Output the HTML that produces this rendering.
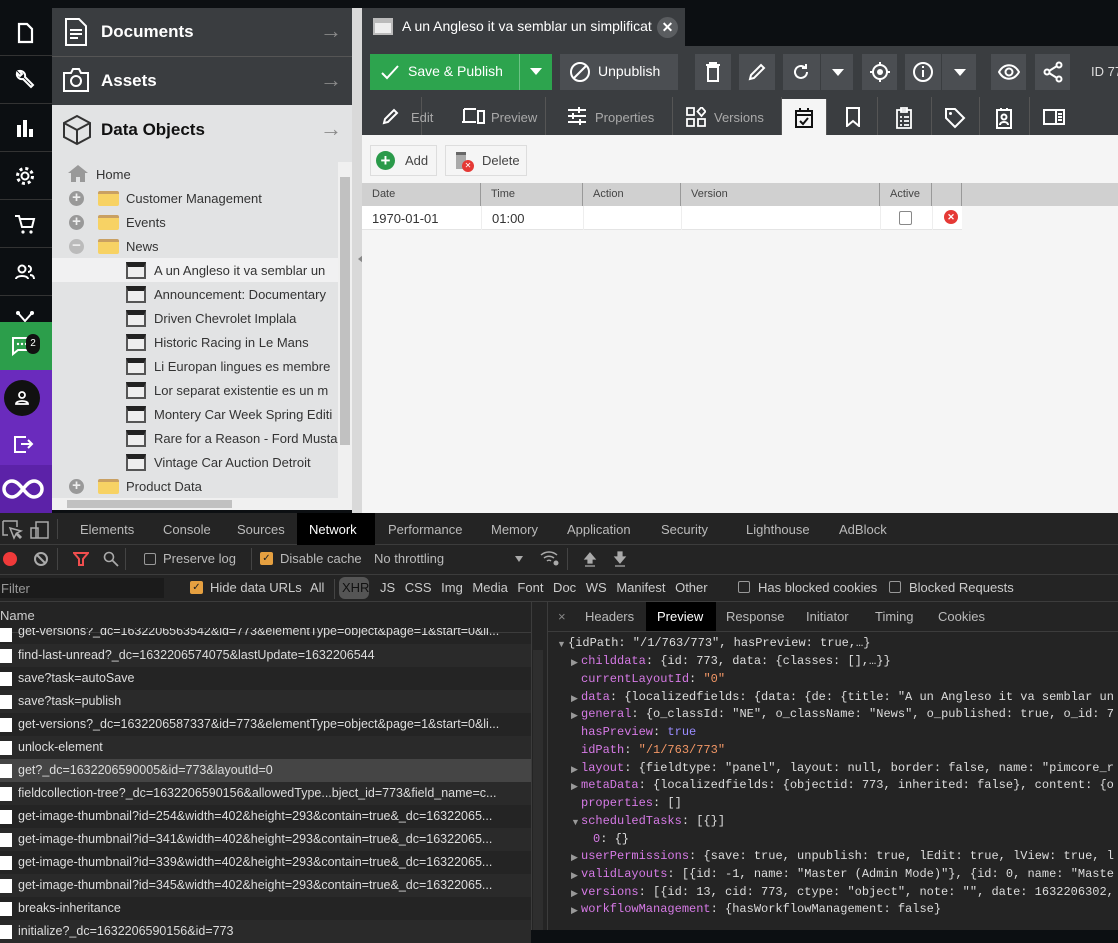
<!DOCTYPE html>
<html><head><meta charset="utf-8"><style>
*{box-sizing:border-box;margin:0;padding:0}
body{width:1118px;height:930px;overflow:hidden;background:#0c0f12;font-family:"Liberation Sans",sans-serif;position:relative}
.a{position:absolute}
.sb svg{position:absolute;left:14px}
.hd{position:absolute;left:52px;width:300px;height:48px;color:#fff;font-weight:bold;font-size:17px}
.hd span{position:absolute;left:49px;top:14px}
.hd .ar{left:auto;right:10px;top:10px;color:#8a8a8a;font-weight:normal;font-size:22px}
.tr{position:absolute;left:52px;width:286px;height:24px;font-size:13px;color:#333}
.tr span{position:absolute;top:5px}
.fold{position:absolute;left:46px;top:5px;width:21px;height:15px;background:#f7d264;border-top:3px solid #c9a062;border-radius:2px}
.pm{position:absolute;left:17px;top:5px;width:15px;height:15px;border-radius:50%;background:#999;color:#eee;font-size:15px;line-height:14px;text-align:center;font-weight:bold}
.obj{position:absolute;left:74px;top:4px;width:20px;height:17px;background:#eee;border:2px solid #555;border-top:5px solid #222}
.btn{position:absolute;top:54px;height:36px;background:#4b4e52;color:#fff}
.btn svg{position:absolute;left:50%;top:50%;transform:translate(-50%,-50%)}
.tab{position:absolute;top:97px;height:38px;color:#aaa;font-size:13px;border-right:1px solid #555}
.tab svg{position:absolute;top:10px}
.tab span{position:absolute;top:13px}
.gh{position:absolute;top:183px;height:23px;font-size:11px;color:#444;border-right:1px solid #999;padding:5px 0 0 10px}
.dt{position:absolute;top:513px;height:32px;color:#bbb;font-size:13px;padding-top:9px}
.row{position:absolute;left:0;width:531px;height:23px;font-size:12.5px;color:#ddd;white-space:nowrap;overflow:hidden}
.row i{position:absolute;left:0;top:5px;width:12px;height:14px;background:#fff}
.row span{position:absolute;left:18px;top:4px}
.js{position:absolute;left:568px;font-family:"Liberation Mono","DejaVu Sans Mono",monospace;font-size:12px;color:#ddd;white-space:nowrap}
.k{color:#d67ae6}.s{color:#f29766}.n{color:#9a8cff}
.tg{position:absolute;left:571px;font-size:9px;color:#999}
</style></head><body>
<!-- left sidebar -->
<div class="a sb" style="left:0;top:0;width:52px;height:322px;background:#0c0f12">
<div class="a" style="left:0;top:55px;width:52px;height:1px;background:#333"></div>
<div class="a" style="left:0;top:103px;width:52px;height:1px;background:#333"></div>
<div class="a" style="left:0;top:151px;width:52px;height:1px;background:#333"></div>
<div class="a" style="left:0;top:199px;width:52px;height:1px;background:#333"></div>
<div class="a" style="left:0;top:247px;width:52px;height:1px;background:#333"></div>
<div class="a" style="left:0;top:295px;width:52px;height:1px;background:#333"></div>
<svg style="top:22px" width="22" height="22" viewBox="0 0 22 22"><path d="M5 2h8l5 5v13H5z" fill="none" stroke="#fff" stroke-width="2.2"/></svg>
<svg style="top:69px" width="22" height="22" viewBox="0 0 22 22"><path d="M3 4a5 5 0 0 0 6 6l8 8 2-2-8-8a5 5 0 0 0-6-6l3 3-2 2z" fill="none" stroke="#fff" stroke-width="2"/></svg>
<svg style="top:117px" width="22" height="22" viewBox="0 0 22 22"><path d="M3 8h4v12H3zM9 3h4v17H9zM15 12h4v8h-4z" fill="#fff"/></svg>
<svg style="top:165px" width="22" height="22" viewBox="0 0 22 22"><circle cx="11" cy="11" r="3.5" fill="none" stroke="#fff" stroke-width="2"/><circle cx="11" cy="11" r="7.5" fill="none" stroke="#fff" stroke-width="3" stroke-dasharray="3 2.9"/></svg>
<svg style="top:213px" width="22" height="22" viewBox="0 0 22 22"><path d="M1 3h4l3 11h10l2-8H6" fill="none" stroke="#fff" stroke-width="2"/><circle cx="9" cy="19" r="1.6" fill="#fff"/><circle cx="17" cy="19" r="1.6" fill="#fff"/></svg>
<svg style="top:261px" width="22" height="22" viewBox="0 0 22 22"><circle cx="8" cy="8" r="3.5" fill="none" stroke="#fff" stroke-width="2"/><path d="M2 18c0-4 12-4 12 0M14 5a3 3 0 0 1 0 6M16 14c3 0 4 2 4 4" fill="none" stroke="#fff" stroke-width="2"/></svg>
<svg style="top:309px" width="22" height="14" viewBox="0 0 22 14"><circle cx="4" cy="4" r="2" fill="#fff"/><circle cx="18" cy="4" r="2" fill="#fff"/><path d="M4 4l7 8 7-8" stroke="#fff" stroke-width="2" fill="none"/></svg>
</div>
<div class="a" style="left:0;top:322px;width:52px;height:48px;background:#2c9e4b">
<svg class="a" style="left:11px;top:13px" width="22" height="22" viewBox="0 0 22 22"><path d="M2 3h18v12H7l-5 4z" fill="none" stroke="#fff" stroke-width="2"/><circle cx="7" cy="9" r="1.2" fill="#fff"/><circle cx="11" cy="9" r="1.2" fill="#fff"/><circle cx="15" cy="9" r="1.2" fill="#fff"/></svg>
<div class="a" style="left:26px;top:12px;width:14px;height:20px;border-radius:7px;background:#111;color:#fff;font-size:10px;text-align:center;line-height:20px">2</div>
</div>
<div class="a" style="left:0;top:370px;width:52px;height:95px;background:#6a2bbd">
<div class="a" style="left:4px;top:10px;width:36px;height:36px;border-radius:50%;background:#111"></div>
<svg class="a" style="left:13px;top:19px" width="18" height="18" viewBox="0 0 18 18"><circle cx="9" cy="6" r="3" fill="none" stroke="#fff" stroke-width="1.8"/><path d="M3 15c0-4 12-4 12 0z" fill="none" stroke="#fff" stroke-width="1.8"/></svg>
<svg class="a" style="left:12px;top:63px" width="22" height="22" viewBox="0 0 22 22"><path d="M14 4H3v15h11M9 11h11M16 7l4 4-4 4" fill="none" stroke="#fff" stroke-width="2"/></svg>
</div>
<div class="a" style="left:0;top:465px;width:52px;height:48px;background:#5c22a8">
<svg class="a" style="left:2px;top:12px" width="42" height="24" viewBox="0 0 42 24"><path d="M21 12c-4-5-7-8-11-8a8 8 0 0 0 0 16c4 0 7-3 11-8s7-8 11-8a8 8 0 0 1 0 16c-4 0-7-3-11-8z" fill="none" stroke="#fff" stroke-width="3.5"/></svg>
</div>
<!-- left panel -->
<div class="hd" style="top:8px;background:#3a3d40"><svg class="a" style="left:12px;top:10px" width="24" height="28" viewBox="0 0 24 28"><path d="M2 1h13l7 7v19H2zM6 12h12M6 16h12M6 20h8" fill="none" stroke="#fff" stroke-width="2"/></svg><span>Documents</span><span class="ar">→</span></div>
<div class="a" style="left:52px;top:56px;width:300px;height:1px;background:#555"></div>
<div class="hd" style="top:57px;background:#3a3d40"><svg class="a" style="left:10px;top:10px" width="28" height="26" viewBox="0 0 28 26"><path d="M2 6h7l2-4h6l2 4h7v18H2z" fill="none" stroke="#fff" stroke-width="2"/><circle cx="14" cy="14" r="5" fill="none" stroke="#fff" stroke-width="2"/></svg><span>Assets</span><span class="ar">→</span></div>
<div class="a" style="left:52px;top:105px;width:300px;height:405px;background:#e2e3e4"></div>
<div class="hd" style="top:106px;color:#111"><svg class="a" style="left:10px;top:8px" width="30" height="32" viewBox="0 0 30 32"><path d="M15 2l13 7v14l-13 7-13-7V9zM2 9l13 7 13-7M15 16v14" fill="none" stroke="#333" stroke-width="2"/></svg><span>Data Objects</span><span class="ar">→</span></div>
<div class="tr" style="top:162px"><svg class="a" style="left:16px;top:3px" width="20" height="17" viewBox="0 0 20 17"><path d="M10 0l10 8h-3v9h-5v-5H8v5H3V8H0z" fill="#999"/></svg><span style="left:44px">Home</span></div>
<div class="tr" style="top:186px"><div class="pm">+</div><div class="fold"></div><span style="left:74px">Customer Management</span></div>
<div class="tr" style="top:210px"><div class="pm">+</div><div class="fold"></div><span style="left:74px">Events</span></div>
<div class="tr" style="top:234px"><div class="pm" style="background:#bbb">−</div><div class="fold"></div><span style="left:74px">News</span></div>
<div class="tr" style="top:258px;background:#f1f1f2"><div class="obj"></div><span style="left:102px">A un Angleso it va semblar un</span></div>
<div class="tr" style="top:282px"><div class="obj"></div><span style="left:102px">Announcement: Documentary</span></div>
<div class="tr" style="top:306px"><div class="obj"></div><span style="left:102px">Driven Chevrolet Implala</span></div>
<div class="tr" style="top:330px"><div class="obj"></div><span style="left:102px">Historic Racing in Le Mans</span></div>
<div class="tr" style="top:354px"><div class="obj"></div><span style="left:102px">Li Europan lingues es membre</span></div>
<div class="tr" style="top:378px"><div class="obj"></div><span style="left:102px">Lor separat existentie es un m</span></div>
<div class="tr" style="top:402px"><div class="obj"></div><span style="left:102px">Montery Car Week Spring Editi</span></div>
<div class="tr" style="top:426px"><div class="obj"></div><span style="left:102px">Rare for a Reason - Ford Musta</span></div>
<div class="tr" style="top:450px"><div class="obj"></div><span style="left:102px">Vintage Car Auction Detroit</span></div>
<div class="tr" style="top:474px"><div class="pm">+</div><div class="fold"></div><span style="left:74px">Product Data</span></div>
<div class="a" style="left:338px;top:162px;width:14px;height:336px;background:#f0f0f0"></div>
<div class="a" style="left:340px;top:177px;width:10px;height:268px;background:#c1c1c1"></div>
<div class="a" style="left:52px;top:498px;width:300px;height:12px;background:#f0f0f0"></div>
<div class="a" style="left:67px;top:500px;width:165px;height:8px;background:#c1c1c1"></div>
<div class="a" style="left:352px;top:8px;width:10px;height:505px;background:#d9d9d9"></div>
<div class="a" style="left:354px;top:255px;width:0;height:0;border:4px solid transparent;border-right:5px solid #888"></div>
<!-- right: tab -->
<div class="a" style="left:362px;top:8px;width:323px;height:38px;background:#3a3d40"></div>
<div class="a" style="left:373px;top:18px;width:20px;height:17px;background:#eee;border:2px solid #bbb;border-top:5px solid #bbb"></div>
<div class="a" style="left:402px;top:18px;color:#fff;font-size:14px">A un Angleso it va semblar un simplificat</div>
<div class="a" style="left:657px;top:17px;width:21px;height:21px;border-radius:50%;background:#5a5d60;color:#fff;text-align:center;font-size:14px;line-height:21px;font-weight:bold">✕</div>
<div class="a" style="left:362px;top:46px;width:756px;height:89px;background:#3a3d40"></div>
<div class="a" style="left:370px;top:54px;width:182px;height:36px;background:#2da44e"></div>
<div class="a" style="left:519px;top:54px;width:1px;height:36px;background:#6cc285"></div>
<svg class="a" style="left:380px;top:62px" width="20" height="20" viewBox="0 0 20 20"><path d="M2 11l5 5L18 4" fill="none" stroke="#fff" stroke-width="2"/></svg>
<div class="a" style="left:408px;top:63px;color:#fff;font-size:14px">Save &amp; Publish</div>
<div class="a" style="left:530px;top:68px;border:6px solid transparent;border-top:7px solid #fff;border-bottom:0"></div>
<div class="btn" style="left:560px;width:118px"><svg style="left:20px" width="22" height="22" viewBox="0 0 22 22"><circle cx="11" cy="11" r="9" fill="none" stroke="#fff" stroke-width="2"/><path d="M5 17L17 5" stroke="#fff" stroke-width="2"/></svg><span class="a" style="left:38px;top:9px;font-size:14px">Unpublish</span></div>
<div class="btn" style="left:695px;width:36px"><svg width="16" height="20" viewBox="0 0 16 20"><path d="M1 3h14M5 3V1h6v2M3 5h10v14H3z" fill="none" stroke="#fff" stroke-width="2"/></svg></div>
<div class="btn" style="left:739px;width:36px"><svg width="20" height="20" viewBox="0 0 20 20"><path d="M3 17l1-4L14 3l3 3L7 16z" fill="none" stroke="#fff" stroke-width="2"/></svg></div>
<div class="btn" style="left:783px;width:70px"><svg style="left:18px" width="20" height="20" viewBox="0 0 20 20"><path d="M16 10a6 6 0 1 1-2-4.5M15 2v4h-4" fill="none" stroke="#fff" stroke-width="2"/></svg><div class="a" style="left:37px;top:0;width:1px;height:36px;background:#3a3d40"></div><div class="a" style="left:49px;top:15px;border:6px solid transparent;border-top:7px solid #fff;border-bottom:0"></div></div>
<div class="btn" style="left:862px;width:35px"><svg width="22" height="22" viewBox="0 0 22 22"><circle cx="11" cy="11" r="7" fill="none" stroke="#fff" stroke-width="2"/><circle cx="11" cy="11" r="3" fill="#fff"/><path d="M11 1v3M11 18v3M1 11h3M18 11h3" stroke="#fff" stroke-width="2"/></svg></div>
<div class="btn" style="left:905px;width:71px"><svg style="left:18px" width="22" height="22" viewBox="0 0 22 22"><circle cx="11" cy="11" r="9" fill="none" stroke="#fff" stroke-width="2"/><path d="M11 9v7M11 5v2" stroke="#fff" stroke-width="2"/></svg><div class="a" style="left:36px;top:0;width:1px;height:36px;background:#3a3d40"></div><div class="a" style="left:49px;top:15px;border:6px solid transparent;border-top:7px solid #fff;border-bottom:0"></div></div>
<div class="btn" style="left:991px;width:35px"><svg width="22" height="16" viewBox="0 0 22 16"><path d="M1 8c5-9 15-9 20 0-5 9-15 9-20 0z" fill="none" stroke="#fff" stroke-width="2"/><circle cx="11" cy="8" r="3.5" fill="none" stroke="#fff" stroke-width="2"/></svg></div>
<div class="btn" style="left:1035px;width:35px"><svg width="20" height="22" viewBox="0 0 20 22"><circle cx="16" cy="4" r="2.5" fill="none" stroke="#fff" stroke-width="2"/><circle cx="4" cy="11" r="2.5" fill="none" stroke="#fff" stroke-width="2"/><circle cx="16" cy="18" r="2.5" fill="none" stroke="#fff" stroke-width="2"/><path d="M6 10l8-5M6 12l8 5" stroke="#fff" stroke-width="2"/></svg></div>
<div class="a" style="left:1091px;top:64px;color:#ddd;font-size:13px;white-space:nowrap">ID 773</div>
<!-- tabs -->
<div class="tab" style="left:362px;width:60px"><svg style="left:20px" width="18" height="18" viewBox="0 0 18 18"><path d="M2 16l1-4L12 3l3 3-9 9z" fill="none" stroke="#fff" stroke-width="2"/></svg><span style="left:49px">Edit</span></div>
<div class="tab" style="left:422px;width:124px"><svg style="left:40px" width="24" height="18" viewBox="0 0 24 18"><path d="M2 2h12M2 2v13h12M0 15h14M16 4h6v12h-6z" fill="none" stroke="#fff" stroke-width="2"/></svg><span style="left:69px">Preview</span></div>
<div class="tab" style="left:546px;width:127px"><svg style="left:21px" width="20" height="18" viewBox="0 0 20 18"><path d="M1 3h18M1 9h18M1 15h18" stroke="#fff" stroke-width="2"/><path d="M12 0v6M6 6v6M13 12v6" stroke="#fff" stroke-width="2"/></svg><span style="left:49px">Properties</span></div>
<div class="tab" style="left:673px;width:109px"><svg style="left:13px" width="20" height="20" viewBox="0 0 20 20"><path d="M1 1h7v7H1zM1 12h7v7H1zM12 12h7v7h-7zM15.5 0l4 4.5-4 4.5-4-4.5z" fill="none" stroke="#fff" stroke-width="1.8"/></svg><span style="left:41px">Versions</span></div>
<div class="tab" style="left:782px;width:45px;background:#f5f5f5;top:99px;height:36px"><svg style="left:12px;top:8px" width="20" height="22" viewBox="0 0 20 22"><path d="M2 4h16v16H2zM2 8h16M6 1v4M14 1v4M6 14l3 3 5-6" fill="none" stroke="#111" stroke-width="2"/></svg></div>
<div class="tab" style="left:827px;width:51px"><svg style="left:19px" width="14" height="20" viewBox="0 0 14 20"><path d="M1 1h12v18l-6-5-6 5z" fill="none" stroke="#fff" stroke-width="2"/></svg></div>
<div class="tab" style="left:878px;width:54px"><svg style="left:16px" width="20" height="22" viewBox="0 0 20 22"><path d="M3 3h14v18H3zM7 1h6v4H7zM6 10h2M10 10h5M6 14h2M10 14h5M6 18h2M10 18h5" fill="none" stroke="#fff" stroke-width="1.8"/></svg></div>
<div class="tab" style="left:932px;width:48px"><svg style="left:12px" width="22" height="22" viewBox="0 0 22 22"><path d="M2 2h9l9 9-9 9-9-9z" fill="none" stroke="#fff" stroke-width="2"/><circle cx="6.5" cy="6.5" r="1.5" fill="#fff"/></svg></div>
<div class="tab" style="left:980px;width:50px"><svg style="left:14px" width="20" height="22" viewBox="0 0 20 22"><path d="M3 3h14v18H3zM7 1v3M13 1v3M6 18c0-4 8-4 8 0" fill="none" stroke="#fff" stroke-width="2"/><circle cx="10" cy="10" r="2.5" fill="none" stroke="#fff" stroke-width="2"/></svg></div>
<div class="tab" style="left:1030px;width:45px;border:0"><svg style="left:13px;top:12px" width="22" height="16" viewBox="0 0 22 16"><path d="M1 1h20v14H1zM13 1v14M15 5h4M15 8h4M15 11h4" fill="none" stroke="#fff" stroke-width="2"/></svg></div>
<!-- content -->
<div class="a" style="left:362px;top:135px;width:756px;height:378px;background:#f5f5f5"></div>
<div class="a" style="left:370px;top:145px;width:67px;height:31px;border:1px solid #ddd;background:#f5f5f5"></div>
<div class="a" style="left:376px;top:151px;width:19px;height:19px;border-radius:50%;background:#2a9a4a;color:#fff;text-align:center;font-weight:bold;font-size:17px;line-height:19px">+</div>
<div class="a" style="left:405px;top:153px;font-size:13px;color:#444">Add</div>
<div class="a" style="left:445px;top:145px;width:82px;height:31px;border:1px solid #ddd;background:#f5f5f5"></div>
<div class="a" style="left:456px;top:152px;width:10px;height:17px;background:#aaa;border-top:3px solid #666"></div>
<div class="a" style="left:462px;top:160px;width:12px;height:12px;border-radius:50%;background:#e53935;color:#fff;font-size:8px;text-align:center;line-height:12px">✕</div>
<div class="a" style="left:482px;top:153px;font-size:13px;color:#444">Delete</div>
<div class="a" style="left:362px;top:183px;width:756px;height:23px;background:#d0d0d0"></div>
<div class="gh" style="left:362px;width:119px">Date</div>
<div class="gh" style="left:481px;width:102px">Time</div>
<div class="gh" style="left:583px;width:98px">Action</div>
<div class="gh" style="left:681px;width:199px">Version</div>
<div class="gh" style="left:880px;width:52px">Active</div>
<div class="gh" style="left:932px;width:30px"></div>
<div class="a" style="left:362px;top:206px;width:600px;height:24px;background:#fff;border-bottom:1px solid #e4e4e4"></div>
<div class="a" style="left:481px;top:206px;width:1px;height:24px;background:#eee"></div>
<div class="a" style="left:583px;top:206px;width:1px;height:24px;background:#eee"></div>
<div class="a" style="left:681px;top:206px;width:1px;height:24px;background:#eee"></div>
<div class="a" style="left:880px;top:206px;width:1px;height:24px;background:#eee"></div>
<div class="a" style="left:932px;top:206px;width:1px;height:24px;background:#eee"></div>
<div class="a" style="left:372px;top:211px;font-size:13px;color:#333">1970-01-01</div>
<div class="a" style="left:492px;top:211px;font-size:13px;color:#333">01:00</div>
<div class="a" style="left:899px;top:211px;width:13px;height:14px;border:1px solid #888;border-radius:2px;background:#fff"></div>
<div class="a" style="left:944px;top:210px;width:14px;height:14px;border-radius:50%;background:#e53935;color:#fff;font-size:9px;text-align:center;line-height:14px;font-weight:bold">✕</div>
<!-- devtools -->
<div class="a" style="left:0;top:513px;width:1118px;height:417px;background:#242424"></div>
<div class="a" style="left:0;top:544px;width:1118px;height:1px;background:#3c3c3c"></div>
<div class="a" style="left:0;top:574px;width:1118px;height:1px;background:#3c3c3c"></div>
<div class="a" style="left:0;top:601px;width:1118px;height:1px;background:#3c3c3c"></div>
<svg class="a" style="left:2px;top:520px" width="48" height="20" viewBox="0 0 48 20"><path d="M1 1h14v6M1 1v14h5M8 8l4 10 2-4 4 4 1-1-4-4 4-2z" fill="none" stroke="#aaa" stroke-width="1.5"/><path d="M34 2h12v16H34zM29 8h7v10h-7z" fill="none" stroke="#aaa" stroke-width="1.5"/></svg>
<div class="a" style="left:57px;top:519px;width:1px;height:20px;background:#444"></div>
<div class="dt" style="left:80px">Elements</div>
<div class="dt" style="left:163px">Console</div>
<div class="dt" style="left:237px">Sources</div>
<div class="dt" style="left:297px;width:78px;background:#000;color:#fff;padding-left:12px">Network</div>
<div class="dt" style="left:388px">Performance</div>
<div class="dt" style="left:491px">Memory</div>
<div class="dt" style="left:567px">Application</div>
<div class="dt" style="left:661px">Security</div>
<div class="dt" style="left:746px">Lighthouse</div>
<div class="dt" style="left:839px">AdBlock</div>
<div class="a" style="left:3px;top:552px;width:14px;height:14px;border-radius:50%;background:#f03a3a"></div>
<svg class="a" style="left:33px;top:551px" width="16" height="16" viewBox="0 0 16 16"><circle cx="8" cy="8" r="6" fill="none" stroke="#aaa" stroke-width="2"/><path d="M4 4l8 8" stroke="#aaa" stroke-width="2"/></svg>
<div class="a" style="left:57px;top:548px;width:1px;height:22px;background:#444"></div>
<svg class="a" style="left:73px;top:551px" width="16" height="16" viewBox="0 0 16 16"><path d="M1 2h14l-5 6v6H6V8z" fill="none" stroke="#f04e4e" stroke-width="2"/></svg>
<svg class="a" style="left:103px;top:551px" width="16" height="16" viewBox="0 0 16 16"><circle cx="6" cy="6" r="4.5" fill="none" stroke="#aaa" stroke-width="1.6"/><path d="M9.5 9.5L15 15" stroke="#aaa" stroke-width="1.8"/></svg>
<div class="a" style="left:125px;top:548px;width:1px;height:22px;background:#444"></div>
<div class="a" style="left:144px;top:553px;width:12px;height:12px;border:1px solid #999;border-radius:2px"></div>
<div class="a" style="left:163px;top:551px;font-size:13px;color:#bbb">Preserve log</div>
<div class="a" style="left:251px;top:548px;width:1px;height:22px;background:#444"></div>
<div class="a" style="left:260px;top:552px;width:13px;height:13px;background:#e6a040;border-radius:2px;color:#222;font-size:10px;text-align:center;line-height:13px">✓</div>
<div class="a" style="left:280px;top:551px;font-size:13px;color:#bbb">Disable cache</div>
<div class="a" style="left:374px;top:551px;font-size:13px;color:#bbb">No throttling</div>
<div class="a" style="left:515px;top:556px;border:4px solid transparent;border-top:6px solid #aaa;border-bottom:0"></div>
<svg class="a" style="left:540px;top:549px" width="20" height="18" viewBox="0 0 20 18"><path d="M1 6a12 12 0 0 1 16 0M4 9a8 8 0 0 1 10 0M7 12a3 3 0 0 1 4 0" fill="none" stroke="#aaa" stroke-width="1.5"/><circle cx="16" cy="14" r="2.5" fill="#aaa"/></svg>
<div class="a" style="left:567px;top:548px;width:1px;height:22px;background:#444"></div>
<svg class="a" style="left:583px;top:551px" width="14" height="16" viewBox="0 0 14 16"><path d="M7 2L2 8h3v4h4V8h3zM2 15h10" fill="#aaa" stroke="#aaa" stroke-width="1.2"/></svg>
<svg class="a" style="left:613px;top:551px" width="14" height="16" viewBox="0 0 14 16"><path d="M7 12L2 6h3V1h4v5h3zM2 15h10" fill="#aaa" stroke="#aaa" stroke-width="1.2"/></svg>
<div class="a" style="left:0;top:578px;width:164px;height:20px;background:#1b1b1b"></div>
<div class="a" style="left:1px;top:581px;font-size:13px;color:#999">Filter</div>
<div class="a" style="left:190px;top:581px;width:13px;height:13px;background:#e6a040;border-radius:2px;color:#222;font-size:10px;text-align:center;line-height:13px">✓</div>
<div class="a" style="left:210px;top:580px;font-size:13px;color:#ccc">Hide data URLs</div>
<div class="a" style="left:310px;top:580px;font-size:13px;color:#ccc">All</div>
<div class="a" style="left:334px;top:579px;width:1px;height:20px;background:#444"></div>
<div class="a" style="left:339px;top:577px;width:30px;height:22px;border-radius:6px;background:#555"></div>
<div class="a" style="left:342px;top:580px;font-size:13px;color:#111">XHR</div>
<div class="a" style="left:380px;top:580px;font-size:13px;color:#ccc;word-spacing:6px">JS CSS Img Media Font Doc WS Manifest Other</div>
<div class="a" style="left:738px;top:581px;width:12px;height:12px;border:1px solid #999;border-radius:2px"></div>
<div class="a" style="left:758px;top:580px;font-size:13px;color:#ccc">Has blocked cookies</div>
<div class="a" style="left:889px;top:581px;width:12px;height:12px;border:1px solid #999;border-radius:2px"></div>
<div class="a" style="left:909px;top:580px;font-size:13px;color:#ccc">Blocked Requests</div>
<!-- name list -->
<div class="a" style="left:0;top:608px;font-size:13px;color:#ccc">Name</div>
<div class="a" style="left:0;top:632px;width:531px;height:1px;background:#3c3c3c"></div>
<div class="a" style="left:531px;top:602px;width:1px;height:328px;background:#3c3c3c"></div>
<div class="a" style="left:547px;top:602px;width:1px;height:328px;background:#3c3c3c"></div>
<div class="a" style="left:533px;top:650px;width:10px;height:280px;background:#2e2e2e"></div>
<div class="row" style="top:628px;height:15px"><i style="top:0"></i><span style="top:-4px">get-versions?_dc=1632206563542&amp;id=773&amp;elementType=object&amp;page=1&amp;start=0&amp;li...</span></div>
<div class="row" style="top:644px;background:#2a2a2a"><i></i><span>find-last-unread?_dc=1632206574075&amp;lastUpdate=1632206544</span></div>
<div class="row" style="top:667px"><i></i><span>save?task=autoSave</span></div>
<div class="row" style="top:690px;background:#2a2a2a"><i></i><span>save?task=publish</span></div>
<div class="row" style="top:713px"><i></i><span>get-versions?_dc=1632206587337&amp;id=773&amp;elementType=object&amp;page=1&amp;start=0&amp;li...</span></div>
<div class="row" style="top:736px;background:#2a2a2a"><i></i><span>unlock-element</span></div>
<div class="row" style="top:759px;background:#454545"><i></i><span>get?_dc=1632206590005&amp;id=773&amp;layoutId=0</span></div>
<div class="row" style="top:782px;background:#2a2a2a"><i></i><span>fieldcollection-tree?_dc=1632206590156&amp;allowedType...bject_id=773&amp;field_name=c...</span></div>
<div class="row" style="top:805px"><i></i><span>get-image-thumbnail?id=254&amp;width=402&amp;height=293&amp;contain=true&amp;_dc=16322065...</span></div>
<div class="row" style="top:828px;background:#2a2a2a"><i></i><span>get-image-thumbnail?id=341&amp;width=402&amp;height=293&amp;contain=true&amp;_dc=16322065...</span></div>
<div class="row" style="top:851px"><i></i><span>get-image-thumbnail?id=339&amp;width=402&amp;height=293&amp;contain=true&amp;_dc=16322065...</span></div>
<div class="row" style="top:874px;background:#2a2a2a"><i></i><span>get-image-thumbnail?id=345&amp;width=402&amp;height=293&amp;contain=true&amp;_dc=16322065...</span></div>
<div class="row" style="top:897px"><i></i><span>breaks-inheritance</span></div>
<div class="row" style="top:920px;background:#2a2a2a"><i></i><span>initialize?_dc=1632206590156&amp;id=773</span></div>
<!-- preview panel -->
<div class="a" style="left:558px;top:609px;font-size:13px;color:#888">×</div>
<div class="a" style="left:585px;top:609px;font-size:13px;color:#bbb">Headers</div>
<div class="a" style="left:646px;top:602px;width:70px;height:30px;background:#000"></div>
<div class="a" style="left:657px;top:609px;font-size:13px;color:#fff">Preview</div>
<div class="a" style="left:726px;top:609px;font-size:13px;color:#bbb">Response</div>
<div class="a" style="left:806px;top:609px;font-size:13px;color:#bbb">Initiator</div>
<div class="a" style="left:875px;top:609px;font-size:13px;color:#bbb">Timing</div>
<div class="a" style="left:938px;top:609px;font-size:13px;color:#bbb">Cookies</div>
<div class="a" style="left:548px;top:631px;width:570px;height:1px;background:#3c3c3c"></div>
<div class="tg" style="left:557px;top:639px">▼</div>
<div class="js" style="top:636px">{idPath: "/1/763/773", hasPreview: true,…}</div>
<div class="tg" style="top:657px">▶</div><div class="js" style="left:581px;top:654px"><span class="k">childdata</span>: {id: 773, data: {classes: [],…}}</div>
<div class="js" style="left:581px;top:672px"><span class="k">currentLayoutId</span>: <span class="s">"0"</span></div>
<div class="tg" style="top:693px">▶</div><div class="js" style="left:581px;top:690px"><span class="k">data</span>: {localizedfields: {data: {de: {title: "A un Angleso it va semblar un</div>
<div class="tg" style="top:710px">▶</div><div class="js" style="left:581px;top:707px"><span class="k">general</span>: {o_classId: "NE", o_className: "News", o_published: true, o_id: 7</div>
<div class="js" style="left:581px;top:725px"><span class="k">hasPreview</span>: <span class="n">true</span></div>
<div class="js" style="left:581px;top:743px"><span class="k">idPath</span>: <span class="s">"/1/763/773"</span></div>
<div class="tg" style="top:764px">▶</div><div class="js" style="left:581px;top:761px"><span class="k">layout</span>: {fieldtype: "panel", layout: null, border: false, name: "pimcore_r</div>
<div class="tg" style="top:781px">▶</div><div class="js" style="left:581px;top:778px"><span class="k">metaData</span>: {localizedfields: {objectid: 773, inherited: false}, content: {o</div>
<div class="js" style="left:581px;top:796px"><span class="k">properties</span>: []</div>
<div class="tg" style="top:817px">▼</div><div class="js" style="left:581px;top:814px"><span class="k">scheduledTasks</span>: [{}]</div>
<div class="js" style="left:593px;top:832px"><span class="k">0</span>: {}</div>
<div class="tg" style="top:852px">▶</div><div class="js" style="left:581px;top:849px"><span class="k">userPermissions</span>: {save: true, unpublish: true, lEdit: true, lView: true, l</div>
<div class="tg" style="top:870px">▶</div><div class="js" style="left:581px;top:867px"><span class="k">validLayouts</span>: [{id: -1, name: "Master (Admin Mode)"}, {id: 0, name: "Maste</div>
<div class="tg" style="top:888px">▶</div><div class="js" style="left:581px;top:885px"><span class="k">versions</span>: [{id: 13, cid: 773, ctype: "object", note: "", date: 1632206302,</div>
<div class="tg" style="top:905px">▶</div><div class="js" style="left:581px;top:902px"><span class="k">workflowManagement</span>: {hasWorkflowManagement: false}</div>
</body></html>
